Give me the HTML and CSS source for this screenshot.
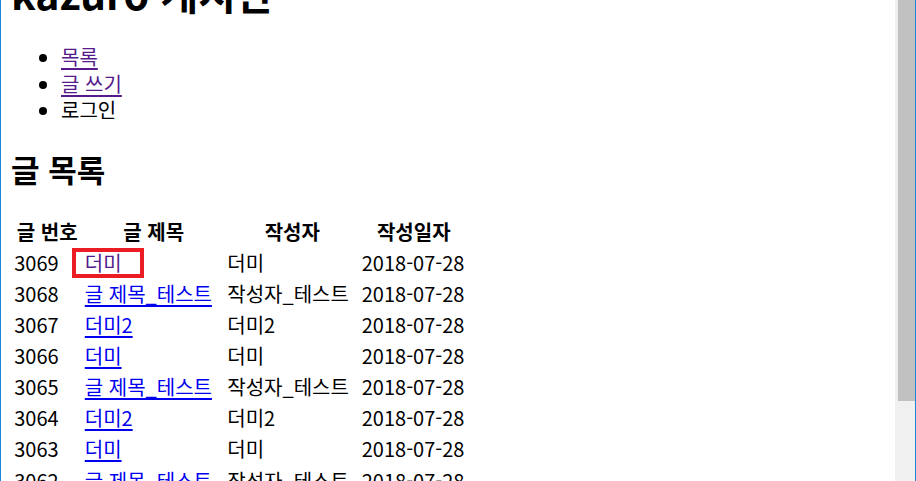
FILE: index.html
```html
<!DOCTYPE html>
<html lang="ko">
<head>
<meta charset="utf-8">
<title>kazuro 게시판</title>
<link rel="stylesheet" href="styles.css">
</head>
<body>
<div class="window">
  <div class="viewport">
    <h1 class="site-title">kazuro 게시판</h1>
    <ul class="nav">
      <li><a class="visited" href="#">목록</a></li>
      <li><a class="visited" href="#">글 쓰기</a></li>
      <li>로그인</li>
    </ul>
    <h2 class="section-title">글 목록</h2>
    <table class="board">
      <thead>
        <tr>
          <th class="col-no">글 번호</th>
          <th class="col-title">글 제목</th>
          <th class="col-author">작성자</th>
          <th class="col-date">작성일자</th>
        </tr>
      </thead>
      <tbody>
        <tr><td>3069</td><td class="title-cell"><a class="visited" href="#">더미</a><span class="highlight"></span></td><td>더미</td><td>2018-07-28</td></tr>
        <tr><td>3068</td><td><a href="#">글 제목_테스트</a></td><td>작성자_테스트</td><td>2018-07-28</td></tr>
        <tr><td>3067</td><td><a href="#">더미2</a></td><td>더미2</td><td>2018-07-28</td></tr>
        <tr><td>3066</td><td><a href="#">더미</a></td><td>더미</td><td>2018-07-28</td></tr>
        <tr><td>3065</td><td><a href="#">글 제목_테스트</a></td><td>작성자_테스트</td><td>2018-07-28</td></tr>
        <tr><td>3064</td><td><a href="#">더미2</a></td><td>더미2</td><td>2018-07-28</td></tr>
        <tr><td>3063</td><td><a href="#">더미</a></td><td>더미</td><td>2018-07-28</td></tr>
        <tr><td>3062</td><td><a href="#">글 제목_테스트</a></td><td>작성자_테스트</td><td>2018-07-28</td></tr>
        <tr><td>3061</td><td><a href="#">더미2</a></td><td>더미2</td><td>2018-07-28</td></tr>
      </tbody>
    </table>
  </div>
  <div class="scrollbar">
    <div class="thumb"></div>
  </div>
</div>
</body>
</html>
```

FILE: styles.css
```css
html, body {
  margin: 0;
  padding: 0;
  background: #ffffff;
}

body {
  font-family: "Noto Sans CJK KR", "Noto Sans", "Liberation Sans", sans-serif;
  font-size: 20px;
  color: #000000;
}

.window {
  display: flex;
  width: 916px;
  height: 481px;
  box-sizing: border-box;
  border-left: 1px solid #1c86d8;
  border-right: 1px solid #1c86d8;
  overflow: hidden;
}

.viewport {
  flex: 1;
  position: relative;
  overflow: hidden;
  padding: 0 10px;
}

.site-title {
  font-size: 41px;
  font-weight: 700;
  line-height: 53px;
  margin: -34px 0 25px;
}

.nav {
  margin: 0 0 20px;
  padding-left: 50px;
  line-height: 26.5px;
}

a {
  color: #0000ee;
  text-decoration: underline;
  text-underline-offset: 3px;
}

a.visited {
  color: #551a8b;
}

.section-title {
  font-size: 31px;
  font-weight: 700;
  line-height: 40px;
  margin: 25px 0 27px;
}

.board {
  border-collapse: separate;
  border-spacing: 2.5px;
  table-layout: fixed;
  line-height: 26.6px;
}

.board th,
.board td {
  padding: 1.25px;
  white-space: nowrap;
}

.board th {
  font-weight: 700;
  text-align: center;
}

.board td {
  text-align: left;
}

.col-no { width: 66px; }
.col-title { width: 138px; }
.col-author { width: 130px; }
.col-date { width: 104px; }

.title-cell {
  position: relative;
}

.highlight {
  position: absolute;
  left: -12px;
  top: -1px;
  width: 72px;
  height: 30px;
  box-sizing: border-box;
  border: 4px solid #ec1c24;
}

.scrollbar {
  width: 20px;
  flex: 0 0 20px;
  background: #f0f0f0;
  display: flex;
  flex-direction: column;
  align-items: flex-end;
}

.thumb {
  width: 17px;
  height: 401px;
  background: #c1c1c1;
}
```
